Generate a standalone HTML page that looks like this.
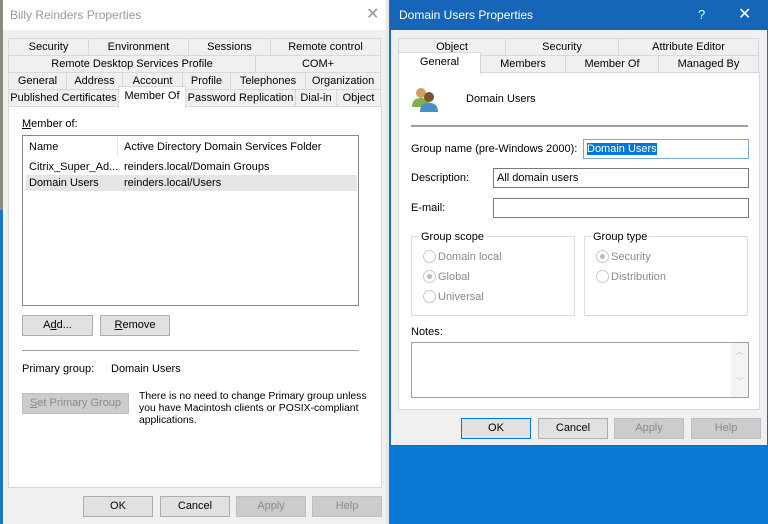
<!DOCTYPE html>
<html><head><style>
*{box-sizing:border-box;margin:0;padding:0}
body{width:768px;height:524px;overflow:hidden;position:relative;background:#0a78d7;font-family:"Liberation Sans",sans-serif;font-size:11px;color:#000}
.a{position:absolute}
.t{position:absolute;border:1px solid #d9d9d9;background:#f0f0f0;text-align:center;line-height:16px;white-space:nowrap}
.btn{position:absolute;background:#e1e1e1;border:1px solid #adadad;text-align:center;line-height:19px;height:21px}
.dis{background:#cccccc;border-color:#bfbfbf;color:#8a8a8a}
.inp{position:absolute;background:#fff;border:1px solid #7a7a7a;height:20px;line-height:18px;padding-left:3px}
.gb{position:absolute;border:1px solid #dcdcdc}
.rad{position:absolute;width:13px;height:13px;border:1px solid #c8c8c8;border-radius:50%;background:#fff}
.rad.on::after{content:"";position:absolute;left:3px;top:3px;width:5px;height:5px;border-radius:50%;background:#bbb}
.g{color:#8a8a8a}
</style></head><body>
<!-- left window -->
<div class="a" style="left:0;top:0;width:389px;height:524px;background:#e6e6e6"></div>
<div class="a" style="left:0;top:0;width:3px;height:524px;background:#8a8a80"></div>
<div class="a" style="left:0;top:210px;width:3px;height:314px;background:#1a78c8"></div>
<div class="a" style="left:3px;top:0;width:383px;height:524px;background:#f0f0f0"></div>
<div class="a" style="left:3px;top:0;width:383px;height:30px;background:#fff"></div>
<div class="a" style="left:10px;top:8px;font-size:12px;color:#999">Billy Reinders Properties</div>
<div class="a" style="left:366px;top:4px;font-size:16px;color:#999">✕</div>
<!-- tabs left -->
<div class="t" style="left:8px;top:38px;width:81px;height:18px">Security</div>
<div class="t" style="left:88px;top:38px;width:101px;height:18px">Environment</div>
<div class="t" style="left:188px;top:38px;width:83px;height:18px">Sessions</div>
<div class="t" style="left:270px;top:38px;width:111px;height:18px">Remote control</div>
<div class="t" style="left:8px;top:55px;width:248px;height:18px">Remote Desktop Services Profile</div>
<div class="t" style="left:255px;top:55px;width:126px;height:18px">COM+</div>
<div class="t" style="left:8px;top:72px;width:59px;height:18px">General</div>
<div class="t" style="left:66px;top:72px;width:57px;height:18px">Address</div>
<div class="t" style="left:122px;top:72px;width:61px;height:18px">Account</div>
<div class="t" style="left:182px;top:72px;width:49px;height:18px">Profile</div>
<div class="t" style="left:230px;top:72px;width:76px;height:18px">Telephones</div>
<div class="t" style="left:305px;top:72px;width:76px;height:18px">Organization</div>
<div class="t" style="left:8px;top:89px;width:111px;height:18px">Published Certificates</div>
<div class="t" style="left:185px;top:89px;width:111px;height:18px">Password Replication</div>
<div class="t" style="left:295px;top:89px;width:42px;height:18px">Dial-in</div>
<div class="t" style="left:336px;top:89px;width:45px;height:18px">Object</div>
<div class="a" style="left:8px;top:106px;width:374px;height:382px;background:#fff;border:1px solid #d9d9d9"></div>
<div class="a" style="left:118px;top:86px;width:68px;height:22px;background:#fff;border:1px solid #d9d9d9;border-bottom:none;text-align:center;line-height:18px">Member Of</div>
<div class="a" style="left:22px;top:118px"><u>M</u>ember of:</div>
<div class="a" style="left:22px;top:135px;width:337px;height:171px;border:1px solid #828790;background:#fff"></div>
<div class="a" style="left:117px;top:137px;width:1px;height:20px;background:#e5e5e5"></div>
<div class="a" style="left:29px;top:141px">Name</div>
<div class="a" style="left:124px;top:141px">Active Directory Domain Services Folder</div>
<div class="a" style="left:29px;top:161px">Citrix_Super_Ad...</div>
<div class="a" style="left:124px;top:161px">reinders.local/Domain Groups</div>
<div class="a" style="left:26px;top:175px;width:331px;height:16px;background:#e5e5e5"></div>
<div class="a" style="left:29px;top:177px">Domain Users</div>
<div class="a" style="left:124px;top:177px">reinders.local/Users</div>
<div class="btn" style="left:22px;top:315px;width:71px">A<u>d</u>d...</div>
<div class="btn" style="left:100px;top:315px;width:70px"><u>R</u>emove</div>
<div class="a" style="left:22px;top:350px;width:337px;height:1px;background:#a0a0a0"></div>
<div class="a" style="left:22px;top:363px">Primary group:</div>
<div class="a" style="left:111px;top:363px">Domain Users</div>
<div class="btn dis" style="left:22px;top:393px;width:107px"><u>S</u>et Primary Group</div>
<div class="a" style="left:139px;top:391px;line-height:12px;font-size:10.4px;white-space:nowrap">There is no need to change Primary group unless<br>you have Macintosh clients or POSIX-compliant<br>applications.</div>
<div class="btn" style="left:83px;top:496px;width:70px">OK</div>
<div class="btn" style="left:160px;top:496px;width:70px">Cancel</div>
<div class="btn dis" style="left:236px;top:496px;width:70px">Apply</div>
<div class="btn dis" style="left:312px;top:496px;width:70px">Help</div>
<!-- right window -->
<div class="a" style="left:390px;top:0;width:378px;height:446px;background:#f0f0f0;border:1px solid #1a6cb8;border-top:none"></div>
<div class="a" style="left:390px;top:0;width:378px;height:30px;background:#1566b8"></div>
<div class="a" style="left:399px;top:8px;font-size:12px;color:#fff">Domain Users Properties</div>
<div class="a" style="left:698px;top:7px;font-size:13px;color:#dfe">?</div>
<div class="a" style="left:738px;top:4px;font-size:16px;color:#fff">✕</div>
<div class="t" style="left:398px;top:38px;width:108px;height:18px">Object</div>
<div class="t" style="left:505px;top:38px;width:114px;height:18px">Security</div>
<div class="t" style="left:618px;top:38px;width:141px;height:18px">Attribute Editor</div>
<div class="t" style="left:480px;top:55px;width:86px;height:18px">Members</div>
<div class="t" style="left:565px;top:55px;width:94px;height:18px">Member Of</div>
<div class="t" style="left:658px;top:55px;width:101px;height:18px">Managed By</div>
<div class="a" style="left:398px;top:72px;width:362px;height:338px;background:#fff;border:1px solid #d9d9d9"></div>
<div class="a" style="left:398px;top:52px;width:83px;height:22px;background:#fff;border:1px solid #d9d9d9;border-bottom:none;text-align:center;line-height:18px">General</div>
<svg class="a" style="left:411px;top:85px" width="30" height="28" viewBox="0 0 30 28"><circle cx="10" cy="8" r="5" fill="#c9a066"/><path d="M1 22c0-7 4-9 9-9s9 2 9 9z" fill="#7fb04a"/><circle cx="18" cy="12" r="5" fill="#7a5230"/><path d="M9 27c0-7 4-9 9-9s9 2 9 9z" fill="#4a8ec8"/></svg>
<div class="a" style="left:466px;top:93px">Domain Users</div>
<div class="a" style="left:411px;top:125px;width:337px;height:2px;background:#a0a0a0"></div>
<div class="a" style="left:411px;top:143px">Group name (pre-Windows 2000):</div>
<div class="inp" style="left:583px;top:139px;width:166px;border-color:#7aa7d9"><span style="background:#0078d7;color:#fff">Domain Users</span></div>
<div class="a" style="left:411px;top:172px">Description:</div>
<div class="inp" style="left:493px;top:168px;width:256px">All domain users</div>
<div class="a" style="left:411px;top:202px">E-mail:</div>
<div class="inp" style="left:493px;top:198px;width:256px"></div>
<div class="gb" style="left:411px;top:236px;width:164px;height:80px"></div>
<div class="a" style="left:419px;top:231px;background:#fff;padding:0 2px">Group scope</div>
<div class="rad" style="left:423px;top:250px"></div><div class="a g" style="left:438px;top:251px">Domain local</div>
<div class="rad on" style="left:423px;top:270px"></div><div class="a g" style="left:438px;top:271px">Global</div>
<div class="rad" style="left:423px;top:290px"></div><div class="a g" style="left:438px;top:291px">Universal</div>
<div class="gb" style="left:584px;top:236px;width:164px;height:80px"></div>
<div class="a" style="left:591px;top:231px;background:#fff;padding:0 2px">Group type</div>
<div class="rad on" style="left:596px;top:250px"></div><div class="a g" style="left:611px;top:251px">Security</div>
<div class="rad" style="left:596px;top:270px"></div><div class="a g" style="left:611px;top:271px">Distribution</div>
<div class="a" style="left:411px;top:326px">Notes:</div>
<div class="a" style="left:411px;top:342px;width:338px;height:56px;border:1px solid #a0a0a0;background:#fff"></div>
<div class="a" style="left:731px;top:343px;width:17px;height:54px;background:#f4f4f4;color:#bbb;font-size:8px;text-align:center;line-height:10px;padding-top:4px">︿<br><br><br>﹀</div>
<div class="btn" style="left:461px;top:418px;width:70px;border-color:#0078d7">OK</div>
<div class="btn" style="left:538px;top:418px;width:70px">Cancel</div>
<div class="btn dis" style="left:614px;top:418px;width:70px">Apply</div>
<div class="btn dis" style="left:691px;top:418px;width:70px">Help</div>
</body></html>
